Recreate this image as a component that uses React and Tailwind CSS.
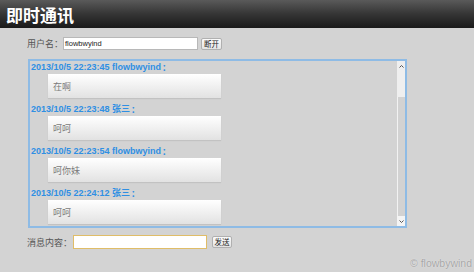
import React from "react";

const messages = [
  { time: "2013/10/5 22:23:45", user: "flowbwyind", text: "在啊" },
  { time: "2013/10/5 22:23:48", user: "张三", text: "呵呵" },
  { time: "2013/10/5 22:23:54", user: "flowbwyind", text: "呵你妹" },
  { time: "2013/10/5 22:24:12", user: "张三", text: "呵呵" },
];

const cjk = { fontFamily: '"Noto Sans CJK SC", sans-serif' };

export default function App() {
  return (
    <div
      className="relative w-[474px] h-[272px] overflow-hidden bg-[#d3d3d3]"
      style={{ fontFamily: '"Liberation Sans", "Noto Sans CJK SC", sans-serif' }}
    >
      <div className="h-[28px] flex items-center px-[6px] bg-gradient-to-b from-[#5a5a5a] via-[#353535] to-[#1a1a1a]">
        <span className="text-[17px] leading-none font-bold text-white" style={cjk}>即时通讯</span>
      </div>

      <div className="mt-[9px] ml-[27px] flex items-center h-[13px]">
        <span className="w-[36px] shrink-0 whitespace-nowrap text-[9px] leading-none text-[#555]" style={cjk}>用户名：</span>
        <div className="w-[135px] shrink-0 h-[13px] bg-white border border-[#b8b8b8] flex items-center pl-[1px]">
          <span className="text-[7.5px] leading-none text-[#222]">flowbwyind</span>
        </div>
        <div className="ml-[3px] shrink-0 w-[21px] h-[12px] flex items-center justify-center border border-[#b0b0b0] rounded-[2px] bg-gradient-to-b from-[#fafafa] to-[#e4e4e4] text-[7.5px] leading-none text-[#222] whitespace-nowrap" style={cjk}>断开</div>
      </div>

      <div className="mt-[9px] ml-[28px] w-[379px] h-[169px] border-2 border-[#8ebbe5] flex">
        <div className="flex-1 overflow-hidden pl-[1px]">
          {messages.map((m, i) => (
            <div key={i} className="mb-[5px]">
              <div className="h-[13px] flex items-center whitespace-nowrap text-[9px] leading-none font-bold text-[#2f8fe3]">
                {m.time} {m.user}<span className="ml-[1px]" style={cjk}>：</span>
              </div>
              <div className="ml-[17px] w-[173px] h-[24px] flex items-center pl-[5px] bg-gradient-to-b from-[#ffffff] to-[#e2e2e2] shadow-[0_1px_1px_rgba(0,0,0,0.08)]">
                <span className="text-[9px] leading-none text-[#7a7a7a]" style={cjk}>{m.text}</span>
              </div>
            </div>
          ))}
        </div>
        <div className="w-[8px] flex flex-col">
          <div className="h-[36px] bg-[#efefef] flex justify-center pt-[4px]">
            <svg width="5" height="3" viewBox="0 0 5 3"><path d="M0.5 2.5 L2.5 0.5 L4.5 2.5" stroke="#555" strokeWidth="1" fill="none" /></svg>
          </div>
          <div className="flex-1 bg-[#d2d2d2] border-l border-[#f2f2f2]"></div>
          <div className="h-[10px] bg-[#f4f4f4] flex justify-center items-center">
            <svg width="5" height="3" viewBox="0 0 5 3"><path d="M0.5 0.5 L2.5 2.5 L4.5 0.5" stroke="#555" strokeWidth="1" fill="none" /></svg>
          </div>
        </div>
      </div>

      <div className="mt-[7px] ml-[27px] flex items-center h-[14px]">
        <span className="w-[46px] shrink-0 whitespace-nowrap text-[9px] leading-none text-[#555]" style={cjk}>消息内容：</span>
        <div className="w-[134px] shrink-0 h-[14px] bg-white border border-[#e0bd68]"></div>
        <div className="ml-[5px] shrink-0 w-[20px] h-[12px] flex items-center justify-center border border-[#b0b0b0] rounded-[2px] bg-gradient-to-b from-[#fafafa] to-[#e4e4e4] text-[7.5px] leading-none text-[#222] whitespace-nowrap" style={cjk}>发送</div>
      </div>

      <div
        className="absolute right-[2px] bottom-[4px] whitespace-nowrap text-[10.5px] leading-none text-[#a6a6a6]"
        style={{ textShadow: "0 0 1px #f4f4f4" }}
      >
        © flowbywind
      </div>
    </div>
  );
}
